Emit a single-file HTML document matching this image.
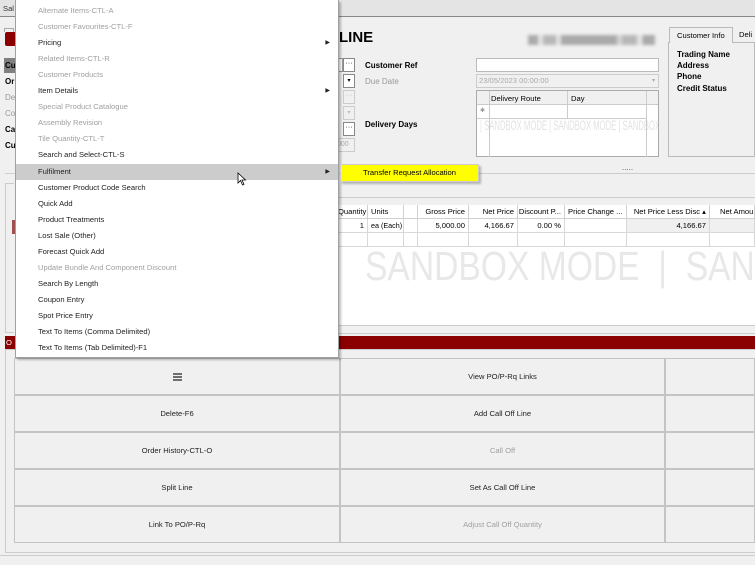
<!DOCTYPE html>
<html><head><meta charset="utf-8"><style>
*{box-sizing:border-box;margin:0;padding:0}
body{width:755px;height:565px;background:#f0f0f0;font-family:"Liberation Sans",sans-serif;font-size:8px;color:#000;position:relative;overflow:hidden;white-space:nowrap}
.a{position:absolute}
.lbl{font-weight:bold;font-size:8px}
.menu{left:15px;top:0;width:324px;height:358px;background:#fff;border:1px solid #a0a0a0;border-top:none;box-shadow:2px 2px 2px rgba(0,0,0,.25)}
.mi{position:absolute;left:0;width:322px;height:16px;line-height:16px;padding-left:22px;font-size:7.6px;color:#222}
.mi.d{color:#a0a0a0}
.mi.h{background:#cccccc}
.arr{position:absolute;right:8px;top:0;font-size:6px}
.btn{position:absolute;background:#f0f0f0;border:1px solid #c4c4c4;font-size:7.6px;color:#222;display:flex;align-items:center;justify-content:center}
.btn.d{color:#a0a0a0}
.th{position:absolute;top:205px;height:14px;line-height:14px;border-right:1px solid #d0d0d0;border-bottom:1px solid #d0d0d0;font-size:7.6px;text-align:right;padding-right:3px;background:#fff;overflow:hidden}
.td{position:absolute;height:14px;line-height:14px;border-right:1px solid #d8d8d8;border-bottom:1px solid #d8d8d8;font-size:7.6px;text-align:right;padding-right:3px;overflow:hidden}
</style></head><body>
<div class="a" style="left:0;top:0;width:755px;height:17px;background:#e4e4e4;border-bottom:1px solid #888"></div>
<div class="a" style="left:3px;top:4px;font-size:7.6px;color:#333">Sal</div>
<div class="a" style="left:5px;top:32px;width:11px;height:14px;background:#8b0000;border-radius:2px"></div>
<div class="a" style="left:4px;top:28px;width:10px;height:4px;border:1px solid #aaa;border-bottom:none"></div>
<div class="a" style="left:4px;top:58px;width:12px;height:15px;background:#808080"></div>
<div class="a lbl" style="left:5px;top:61px">Cu</div>
<div class="a lbl" style="left:5px;top:77px">Or</div>
<div class="a" style="left:5px;top:93px;color:#999">De</div>
<div class="a" style="left:5px;top:109px;color:#999">Co</div>
<div class="a lbl" style="left:5px;top:125px">Ca</div>
<div class="a lbl" style="left:5px;top:141px">Cu</div>
<div class="a" style="left:5px;top:173px;width:750px;border-top:1px solid #d0d0d0"></div>
<div class="a" style="left:5px;top:183px;width:9px;height:150px;border:1px solid #ccc;border-right:none"></div>
<div class="a" style="left:12px;top:220px;width:3px;height:14px;background:#a05050"></div>

<div class="a" style="left:339px;top:29px;font-size:15px;font-weight:bold">LINE</div>
<div class="a" style="left:528px;top:35px;width:127px;height:10px;background:linear-gradient(90deg,#999 0 8%,#e0e0e0 8% 12%,#aaa 12% 22%,#ddd 22% 26%,#999 26% 70%,#ccc 70% 74%,#aaa 74% 86%,#e0e0e0 86% 90%,#999 90%);filter:blur(1.5px);opacity:.8"></div>

<div class="a" style="left:339px;top:58px;width:4px;height:14px;background:#fff;border:1px solid #999;border-left:none"></div>
<div class="a" style="left:343px;top:58px;width:12px;height:14px;background:#fff;border:1px solid #888;font-size:7px;text-align:center;line-height:10px">···</div>
<div class="a" style="left:343px;top:74px;width:12px;height:14px;background:#fff;border:1px solid #888;font-size:6px;text-align:center;line-height:13px">▾</div>
<div class="a" style="left:343px;top:90px;width:12px;height:14px;border:1px solid #ccc;color:#bbb;font-size:7px;text-align:center;line-height:10px">···</div>
<div class="a" style="left:343px;top:106px;width:12px;height:14px;border:1px solid #ccc;color:#bbb;font-size:6px;text-align:center;line-height:13px">▾</div>
<div class="a" style="left:343px;top:122px;width:12px;height:14px;background:#fff;border:1px solid #888;font-size:7px;text-align:center;line-height:10px">···</div>
<div class="a" style="left:336px;top:138px;width:19px;height:14px;border:1px solid #ccc;color:#aaa;font-size:7px;line-height:12px">000</div>

<div class="a lbl" style="left:365px;top:61px">Customer Ref</div>
<div class="a" style="left:365px;top:77px;color:#999">Due Date</div>
<div class="a lbl" style="left:365px;top:120px">Delivery Days</div>
<div class="a" style="left:476px;top:58px;width:183px;height:14px;background:#fff;border:1px solid #bbb"></div>
<div class="a" style="left:476px;top:74px;width:183px;height:14px;border:1px solid #ccc;color:#aaa;font-size:7.6px;line-height:12px;padding-left:2px">23/05/2023 00:00:00<span style="position:absolute;right:3px;font-size:6px">▾</span></div>
<div class="a" style="left:476px;top:90px;width:183px;height:67px;background:#fff;border:1px solid #aaa;overflow:hidden">
<div class="a" style="left:0;top:0;width:181px;height:14px;background:#f0f0f0;border-bottom:1px solid #ccc"></div>
<div class="a" style="left:3px;top:26px;font-size:14px;color:#e2e2e2;transform:scaleX(.55);transform-origin:left">| SANDBOX MODE | SANDBOX MODE | SANDBOX MODE</div>
</div>
<div class="a" style="left:489px;top:91px;height:66px;border-left:1px solid #ccc"></div>
<div class="a" style="left:567px;top:91px;height:27px;border-left:1px solid #ccc"></div>
<div class="a" style="left:646px;top:91px;height:66px;border-left:1px solid #ccc"></div>
<div class="a" style="left:491px;top:94px;font-size:7.6px">Delivery Route</div>
<div class="a" style="left:571px;top:94px;font-size:7.6px">Day</div>
<div class="a" style="left:480px;top:107px;font-size:6px;color:#999">✱</div>
<div class="a" style="left:477px;top:118px;width:169px;border-top:1px solid #ccc"></div>
<div class="a" style="left:622px;top:163px;font-size:8px;color:#555">.....</div>
<div class="a" style="left:338px;top:173px;width:417px;border-top:1px solid #ccc"></div>
<div class="a" style="left:338px;top:197px;width:417px;border-top:1px solid #ccc"></div>

<div class="a" style="left:668px;top:42px;width:87px;height:115px;border:1px solid #bbb;background:#f0f0f0"></div>
<div class="a" style="left:669px;top:27px;width:64px;height:16px;background:#f0f0f0;border:1px solid #bbb;border-bottom:none;font-size:7.6px;line-height:15px;padding-left:7px">Customer Info</div>
<div class="a" style="left:739px;top:30px;font-size:7.6px">Deli</div>
<div class="a lbl" style="left:677px;top:50px">Trading Name</div>
<div class="a lbl" style="left:677px;top:61px">Address</div>
<div class="a lbl" style="left:677px;top:72px">Phone</div>
<div class="a lbl" style="left:677px;top:84px">Credit Status</div>

<div class="a" style="left:338px;top:205px;width:417px;height:120px;background:#fff"></div>
<div class="a" style="left:365px;top:243px;font-size:41px;color:#e8e8e8;transform:scaleX(.82);transform-origin:left">SANDBOX MODE &nbsp;| &nbsp;SANDBOX</div>
<div class="th" style="left:338px;width:30px">Quantity</div>
<div class="th" style="left:368px;width:36px;text-align:left;padding-left:3px">Units</div>
<div class="th" style="left:404px;width:14px"></div>
<div class="th" style="left:418px;width:51px">Gross Price</div>
<div class="th" style="left:469px;width:49px">Net Price</div>
<div class="th" style="left:518px;width:47px">Discount P...</div>
<div class="th" style="left:565px;width:62px;text-align:left;padding-left:3px">Price Change ...</div>
<div class="th" style="left:627px;width:83px">Net Price Less Disc ▴</div>
<div class="th" style="left:710px;width:45px;text-align:left;padding-left:10px">Net Amou</div>
<div class="td" style="left:338px;top:219px;width:30px">1</div>
<div class="td" style="left:368px;top:219px;width:36px;text-align:left;padding-left:3px;font-size:7.2px">ea (Each)</div>
<div class="td" style="left:404px;top:219px;width:14px"></div>
<div class="td" style="left:418px;top:219px;width:51px">5,000.00</div>
<div class="td" style="left:469px;top:219px;width:49px">4,166.67</div>
<div class="td" style="left:518px;top:219px;width:47px">0.00 %</div>
<div class="td" style="left:565px;top:219px;width:62px"></div>
<div class="td" style="left:627px;top:219px;width:83px;background:#f0f0f0">4,166.67</div>
<div class="td" style="left:710px;top:219px;width:45px;background:#f0f0f0"></div>
<div class="td" style="left:338px;top:233px;width:30px"></div>
<div class="td" style="left:368px;top:233px;width:36px"></div>
<div class="td" style="left:404px;top:233px;width:14px"></div>
<div class="td" style="left:418px;top:233px;width:51px"></div>
<div class="td" style="left:469px;top:233px;width:49px"></div>
<div class="td" style="left:518px;top:233px;width:47px"></div>
<div class="td" style="left:565px;top:233px;width:62px"></div>
<div class="td" style="left:627px;top:233px;width:83px"></div>
<div class="td" style="left:710px;top:233px;width:45px"></div>
<div class="a" style="left:338px;top:325px;width:417px;height:9px;background:#f0f0f0;border-top:1px solid #ccc;border-bottom:1px solid #ccc"></div>

<div class="a" style="left:5px;top:336px;width:750px;height:13px;background:#8b0000"></div>
<div class="a" style="left:6px;top:338px;font-size:7.6px;color:#fff">O</div>
<div class="a" style="left:5px;top:349px;width:750px;height:204px;border:1px solid #ccc;border-right:none"></div>
<div class="a" style="left:0;top:555px;width:755px;border-top:1px solid #ccc"></div>

<div class="btn" style="left:14px;top:358px;width:326px;height:37px"><svg width="9" height="8" viewBox="0 0 9 8"><path d="M0 1h9M0 4h9M0 7h9" stroke="#222" stroke-width="1.3"/></svg></div>
<div class="btn" style="left:340px;top:358px;width:325px;height:37px">View PO/P-Rq Links</div>
<div class="btn" style="left:665px;top:358px;width:90px;height:37px"></div>
<div class="btn" style="left:14px;top:395px;width:326px;height:37px">Delete-F6</div>
<div class="btn" style="left:340px;top:395px;width:325px;height:37px">Add Call Off Line</div>
<div class="btn" style="left:665px;top:395px;width:90px;height:37px"></div>
<div class="btn" style="left:14px;top:432px;width:326px;height:37px">Order History-CTL-O</div>
<div class="btn d" style="left:340px;top:432px;width:325px;height:37px">Call Off</div>
<div class="btn" style="left:665px;top:432px;width:90px;height:37px"></div>
<div class="btn" style="left:14px;top:469px;width:326px;height:37px">Split Line</div>
<div class="btn" style="left:340px;top:469px;width:325px;height:37px">Set As Call Off Line</div>
<div class="btn" style="left:665px;top:469px;width:90px;height:37px"></div>
<div class="btn" style="left:14px;top:506px;width:326px;height:37px">Link To PO/P-Rq</div>
<div class="btn d" style="left:340px;top:506px;width:325px;height:37px">Adjust Call Off Quantity</div>
<div class="btn" style="left:665px;top:506px;width:90px;height:37px"></div>

<div class="a menu">
<div class="mi d" style="top:3px">Alternate Items-CTL-A</div>
<div class="mi d" style="top:19px">Customer Favourites-CTL-F</div>
<div class="mi" style="top:35px">Pricing<span class="arr">▶</span></div>
<div class="mi d" style="top:51px">Related Items-CTL-R</div>
<div class="mi d" style="top:67px">Customer Products</div>
<div class="mi" style="top:83px">Item Details<span class="arr">▶</span></div>
<div class="mi d" style="top:99px">Special Product Catalogue</div>
<div class="mi d" style="top:115px">Assembly Revision</div>
<div class="mi d" style="top:131px">Tile Quantity-CTL-T</div>
<div class="mi" style="top:147px">Search and Select-CTL-S</div>
<div class="mi h" style="top:164px">Fulfilment<span class="arr">▶</span></div>
<div class="mi" style="top:180px">Customer Product Code Search</div>
<div class="mi" style="top:196px">Quick Add</div>
<div class="mi" style="top:212px">Product Treatments</div>
<div class="mi" style="top:228px">Lost Sale (Other)</div>
<div class="mi" style="top:244px">Forecast Quick Add</div>
<div class="mi d" style="top:260px">Update Bundle And Component Discount</div>
<div class="mi" style="top:276px">Search By Length</div>
<div class="mi" style="top:292px">Coupon Entry</div>
<div class="mi" style="top:308px">Spot Price Entry</div>
<div class="mi" style="top:324px">Text To Items (Comma Delimited)</div>
<div class="mi" style="top:340px">Text To Items (Tab Delimited)-F1</div>
</div>
<svg class="a" style="left:237px;top:172px" width="10" height="14" viewBox="0 0 10 14"><path d="M1 1 L1 11 L3.5 8.5 L5.5 13 L7 12.3 L5 8 L8.5 8 Z" fill="#fff" stroke="#000" stroke-width="0.8"/></svg>
<div class="a" style="left:340px;top:164px;width:139px;height:18px;background:#ffff00;border:1px solid #ccc;box-shadow:2px 2px 2px rgba(0,0,0,.25);font-size:7.6px;line-height:16px;padding-left:22px">Transfer Request Allocation</div>
</body></html>
